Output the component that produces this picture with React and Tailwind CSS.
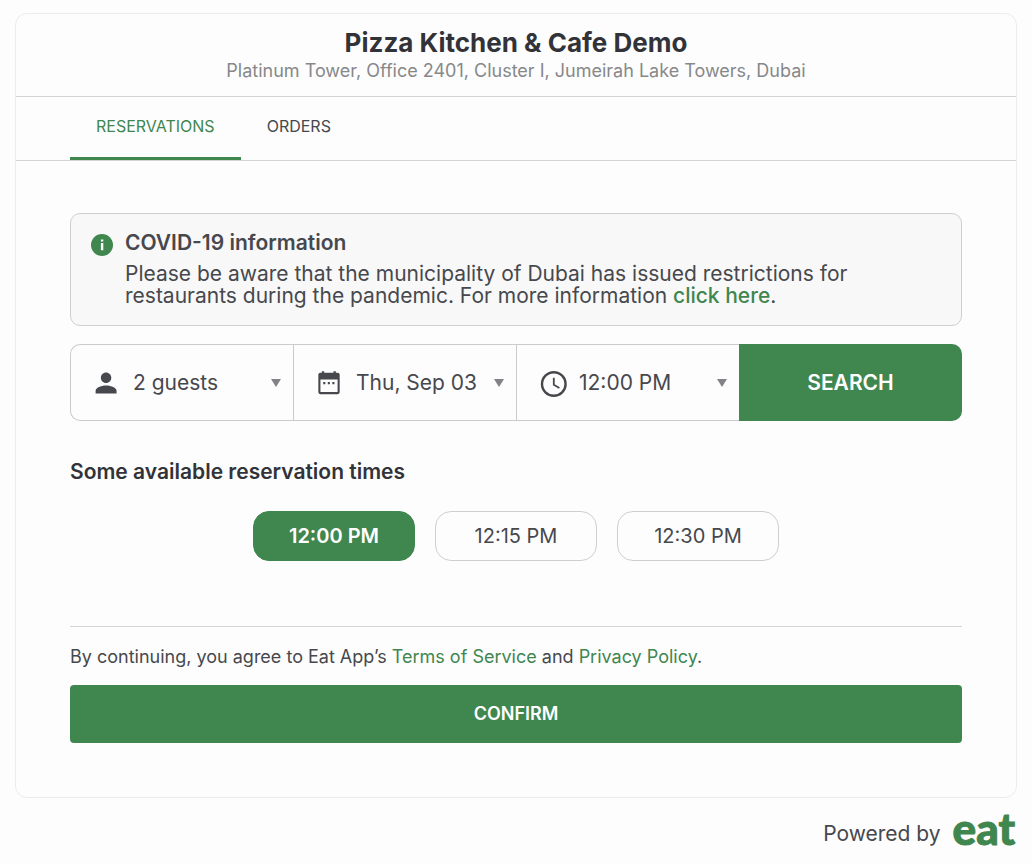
import React, { useState } from "react";

const TABS = ["Reservations", "Orders"];
const SLOTS = ["12:00 PM", "12:15 PM", "12:30 PM"];

const InfoIcon = () => (
  <svg viewBox="0 0 22 22" className="size-[22px] shrink-0" aria-hidden="true">
    <circle cx="11" cy="11" r="11" fill="#3f864f" />
    <path d="M9.9 5.4h2.4v2.2H9.9zM9.9 9h2.4v7.2H9.9z" fill="#fff" />
  </svg>
);

const PersonIcon = () => (
  <svg viewBox="2 1.3 21.4 21.4" className="size-7 shrink-0 fill-[#47484d]" aria-hidden="true">
    <path d="M12 12c2.21 0 4-1.79 4-4s-1.79-4-4-4-4 1.79-4 4 1.79 4 4 4zm0 2c-2.67 0-8 1.34-8 4v2h16v-2c0-2.66-5.33-4-8-4z" />
  </svg>
);

const CalendarIcon = () => (
  <svg viewBox="1 0 24 24" className="size-7 shrink-0 fill-[#47484d]" aria-hidden="true">
    <path d="M9 11.2H7.2V13H9v-1.8zm3.9 0h-1.8V13h1.8v-1.8zm3.9 0H15V13h1.8v-1.8zM19.5 3.2H18V2h-2v1.2H8V2H6v1.2H4.8C3.8 3.2 3 4 3 5v14.8c0 1 .8 1.8 1.8 1.8h14.7c1 0 1.8-.8 1.8-1.8V5c0-1-.8-1.8-1.8-1.8zm0 16.6H4.8V9h14.7v10.8z" />
  </svg>
);

const ClockIcon = () => (
  <svg viewBox="0 0 28 28" className="size-7 shrink-0 fill-none stroke-[#47484d]" strokeWidth="2.4" aria-hidden="true">
    <circle cx="14.8" cy="15" r="11.8" />
    <path d="M14.8 8.8v7l5.6 3.2" strokeWidth="1.8" />
  </svg>
);

const Picker = ({ icon, label, options, className }) => (
  <label className={`flex items-center gap-3 border-y border-l border-[#cbcbcb] pl-[22px] pr-3 ${className}`}>
    {icon}
    <select
      aria-label={label}
      className="h-9 min-w-0 flex-1 appearance-none bg-transparent text-[21px] leading-9 text-[#47484d] outline-none"
    >
      {options.map((o) => (
        <option key={o}>{o}</option>
      ))}
    </select>
    <svg viewBox="0 0 10 8" className="h-2 w-[10px] shrink-0 fill-[#828386]" aria-hidden="true">
      <path d="M0 0h10L5 8z" />
    </svg>
  </label>
);

export default function App() {
  const [tab, setTab] = useState(TABS[0]);
  const [slot, setSlot] = useState(SLOTS[0]);

  return (
    <div className="min-h-screen bg-[#fdfdfd] px-[15px] pt-[13px] font-['Inter',sans-serif] text-[#47484d]">
      <main className="rounded-xl border border-[#ececec]">
        <header className="border-b border-[#d4d4d4] pt-[13px] pb-[13px] text-center">
          <h1 className="text-[26px] leading-8 font-bold text-[#323338]">Pizza Kitchen &amp; Cafe Demo</h1>
          <p className="text-lg leading-6 text-[#87888a]">
            Platinum Tower, Office 2401, Cluster I, Jumeirah Lake Towers, Dubai
          </p>
        </header>

        <nav className="flex border-b border-[#d4d4d4] px-[54px]">
          {TABS.map((t) => (
            <button
              key={t}
              type="button"
              onClick={() => setTab(t)}
              className={`h-[63px] border-b-3 px-[26px] pb-[2px] text-base uppercase ${
                t === tab ? "border-[#3f864f] text-[#3f864f]" : "border-transparent"
              }`}
            >
              {t}
            </button>
          ))}
        </nav>

        <div className="px-[54px] pt-[52px] pb-[54px]">
          <section className="flex gap-3 rounded-[10px] border border-[#cfcfcf] bg-[#f8f8f8] px-5 pt-[15px] pb-[18px]">
            <div className="pt-[5px]">
              <InfoIcon />
            </div>
            <div>
              <h2 className="text-[21px] leading-7 font-semibold">COVID-19 information</h2>
              <p className="mt-[6px] max-w-[740px] text-[21px] leading-[22px]">
                Please be aware that the municipality of Dubai has issued restrictions for restaurants during the
                pandemic. For more information{" "}
                <a href="#covid" className="font-medium text-[#3f864f]">click here</a>.
              </p>
            </div>
          </section>

          <form className="mt-[18px] grid h-[77px] grid-cols-4" onSubmit={(e) => e.preventDefault()}>
            <Picker
              icon={<PersonIcon />}
              label="Guests"
              options={["2 guests", "3 guests", "4 guests"]}
              className="rounded-l-[10px]"
            />
            <Picker icon={<CalendarIcon />} label="Date" options={["Thu, Sep 03", "Fri, Sep 04"]} className="" />
            <Picker icon={<ClockIcon />} label="Time" options={SLOTS} className="" />
            <button type="submit" className="rounded-r-[10px] bg-[#3f864f] text-[21px] font-semibold text-white">
              SEARCH
            </button>
          </form>

          <h2 className="mt-9 text-[21px] leading-[30px] font-semibold text-[#323338]">
            Some available reservation times
          </h2>
          <div className="mt-6 flex justify-center gap-5">
            {SLOTS.map((s) => (
              <button
                key={s}
                type="button"
                onClick={() => setSlot(s)}
                className={`h-[50px] w-[162px] rounded-2xl border text-xl ${
                  s === slot ? "border-[#3f864f] bg-[#3f864f] font-semibold text-white" : "border-[#cfcfcf]"
                }`}
              >
                {s}
              </button>
            ))}
          </div>

          <div className="mt-[65px] border-t border-[#d4d4d4] pt-4">
            <p className="text-lg leading-7">
              By continuing, you agree to Eat App’s{" "}
              <a href="#terms" className="text-[#3f864f]">Terms of Service</a> and{" "}
              <a href="#privacy" className="text-[#3f864f]">Privacy Policy</a>.
            </p>
            <button type="button" className="mt-[14px] h-[58px] w-full rounded bg-[#3f864f] text-lg font-semibold text-white">
              CONFIRM
            </button>
          </div>
        </div>
      </main>

      <footer className="flex items-end justify-end gap-3 pt-2 pr-0.5">
        <span className="text-[21px] leading-8">Powered by</span>
        <a
          href="#eat"
          className="font-['Lato',sans-serif] text-[44px] leading-[44px] font-black text-[#3f864f] [-webkit-text-stroke:1px_#3f864f]"
        >
          eat
        </a>
      </footer>
    </div>
  );
}
